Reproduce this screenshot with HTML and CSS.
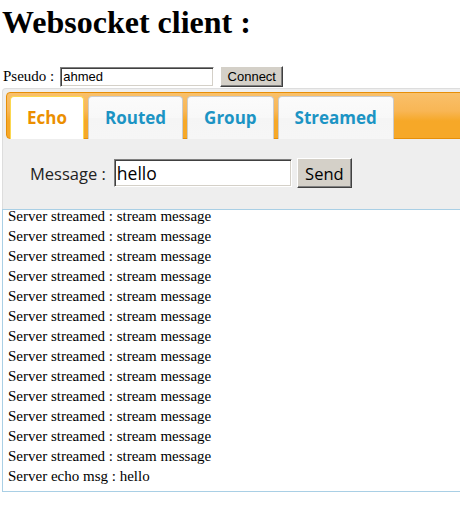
FILE: index.html
```html
<!DOCTYPE html>
<html>
<head>
<meta charset="utf-8">
<title>Websocket client</title>
<link rel="stylesheet" href="styles.css">
</head>
<body>
<h1 class="title">Websocket client :</h1>
<div class="login">
  <span class="login-label">Pseudo :</span>
  <input class="login-input" type="text" value="ahmed">
  <button class="win-btn connect-btn">Connect</button>
</div>
<div class="tabs">
  <ul class="tabs-nav">
    <li class="tab tab-active">Echo</li>
    <li class="tab">Routed</li>
    <li class="tab">Group</li>
    <li class="tab">Streamed</li>
  </ul>
  <div class="tab-panel">
    <span class="msg-label">Message :</span>
    <input class="msg-input" type="text" value="hello">
    <button class="win-btn send-btn">Send</button>
  </div>
</div>
<div class="log">
  <div class="log-line">Server streamed : stream message</div>
  <div class="log-line">Server streamed : stream message</div>
  <div class="log-line">Server streamed : stream message</div>
  <div class="log-line">Server streamed : stream message</div>
  <div class="log-line">Server streamed : stream message</div>
  <div class="log-line">Server streamed : stream message</div>
  <div class="log-line">Server streamed : stream message</div>
  <div class="log-line">Server streamed : stream message</div>
  <div class="log-line">Server streamed : stream message</div>
  <div class="log-line">Server streamed : stream message</div>
  <div class="log-line">Server streamed : stream message</div>
  <div class="log-line">Server streamed : stream message</div>
  <div class="log-line">Server streamed : stream message</div>
  <div class="log-line">Server echo msg : hello</div>
</div>
</body>
</html>
```
FILE: styles.css
```css
html {
  overflow: hidden;
  background: #fff;
}
body {
  margin: 0;
  padding: 0 0 0 2px;
  width: 540px;
  font-family: "Liberation Serif", "Times New Roman", serif;
  font-size: 16px;
  color: #000;
}
.title {
  margin: 4px 0 0 0;
  font-size: 32px;
  font-weight: bold;
  line-height: 37px;
}
.login {
  display: flex;
  align-items: center;
  height: 21px;
  margin-top: 25px;
  font-size: 15px;
}
.login-label {
  margin-right: 6px;
  padding-left: 1px;
}
.login-input {
  box-sizing: border-box;
  width: 154px;
  height: 20px;
  margin: 0 6px 0 0;
  padding: 0 2px;
  border: 1px solid;
  border-color: #808080 #fff #fff #808080;
  box-shadow: inset 1px 1px #404040, inset -1px -1px #d4d0c8;
  font-family: "Liberation Sans", Arial, sans-serif;
  font-size: 13px;
  background: #fff;
  color: #000;
  outline: none;
}
.win-btn {
  box-sizing: border-box;
  margin: 0;
  padding: 0;
  background: #d4d0c8;
  border: 1px solid;
  border-color: #fff #404040 #404040 #fff;
  box-shadow: inset -1px -1px #808080;
  color: #000;
}
.connect-btn {
  width: 63px;
  height: 21px;
  font-family: "Liberation Sans", Arial, sans-serif;
  font-size: 13px;
}
.tabs {
  margin-top: 1px;
  padding: 3px 3px 0 3px;
  border: 1px solid #dddddd;
  border-bottom: none;
  border-radius: 4px 4px 0 0;
  background: #eeeeee;
  font-family: "Open Sans", "Noto Sans", sans-serif;
}
.tabs-nav {
  display: flex;
  gap: 4px;
  margin: 0;
  padding: 3px 3px 0 3px;
  height: 42px;
  list-style: none;
  border: 1px solid #e78f08;
  border-radius: 4px;
  background: linear-gradient(to bottom, #f9c06a 0%, #f8b655 40%, #f6a828 62%, #f6a828 100%);
}
.tab {
  height: 42px;
  padding: 0 16px;
  line-height: 42px;
  border: 1px solid #cccccc;
  border-bottom: none;
  border-radius: 4px 4px 0 0;
  background: linear-gradient(to bottom, #fbfbfb 0%, #f8f8f8 50%, #f5f5f5 51%, #f6f6f6 100%);
  color: #1c94c4;
  font-size: 17px;
  font-weight: 700;
}
.tab-active {
  border-color: #fbd850;
  background: #ffffff;
  color: #eb8f00;
}
.tab-panel {
  display: flex;
  align-items: center;
  padding: 19px 0 21px 24px;
  font-size: 16.5px;
  color: #222;
}
.msg-label {
  margin-right: 8px;
  color: #222;
}
.msg-input {
  box-sizing: border-box;
  width: 178px;
  height: 28px;
  margin: 0 5px 0 0;
  padding: 0 2px;
  border: 1px solid;
  border-color: #808080 #fff #fff #808080;
  box-shadow: inset 1px 1px #404040, inset -1px -1px #d4d0c8;
  font-family: "Open Sans", "Noto Sans", sans-serif;
  font-size: 17.5px;
  color: #000;
  background: #fff;
  outline: none;
}
.send-btn {
  width: 55px;
  height: 30px;
  font-family: "Open Sans", "Noto Sans", sans-serif;
  font-size: 16.5px;
}
.log {
  box-sizing: border-box;
  height: 283px;
  display: flex;
  flex-direction: column;
  justify-content: flex-end;
  overflow: hidden;
  padding: 0 0 5px 5px;
  border: 1px solid #a9cfe5;
  background: #fff;
  font-size: 15px;
}
.log-line {
  flex: none;
  line-height: 20px;
  white-space: nowrap;
}
```
